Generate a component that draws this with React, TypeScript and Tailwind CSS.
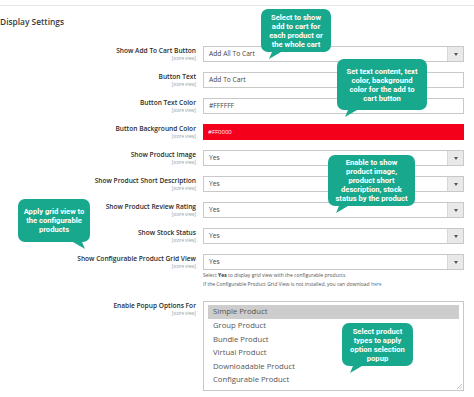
import type { ReactNode } from "react";

const font = { fontFamily: '"Open Sans", "Liberation Sans", sans-serif' };
const tipFont = { fontFamily: 'Roboto, "Liberation Sans", sans-serif' };

type Row = {
  label: string;
  value: string;
  kind: "select" | "text" | "color";
};

const rows: Row[] = [
  { label: "Show Add To Cart Button", value: "Add All To Cart", kind: "select" },
  { label: "Button Text", value: "Add To Cart", kind: "text" },
  { label: "Button Text Color", value: "#FFFFFF", kind: "text" },
  { label: "Button Background Color", value: "#FF0000", kind: "color" },
  { label: "Show Product Image", value: "Yes", kind: "select" },
  { label: "Show Product Short Description", value: "Yes", kind: "select" },
  { label: "Show Product Review Rating", value: "Yes", kind: "select" },
  { label: "Show Stock Status", value: "Yes", kind: "select" },
  { label: "Show Configurable Product Grid View", value: "Yes", kind: "select" },
];

const productTypes = [
  "Simple Product",
  "Group Product",
  "Bundle Product",
  "Virtual Product",
  "Downloadable Product",
  "Configurable Product",
];

function Label({ text }: { text: string }) {
  return (
    <div className="w-[203px] shrink-0 pr-[7px] pt-[2px] text-right leading-none">
      <div className="text-[6.6px] font-semibold text-[#2b2b2b]">{text}</div>
      <div className="mt-[1px] text-[4.5px] text-[#999]">[store view]</div>
    </div>
  );
}

function Field({ row }: { row: Row }) {
  if (row.kind === "color") {
    return (
      <div className="flex h-[16px] w-[261px] items-center bg-[#f5001b] pl-[5px] text-[6px] text-white">
        {row.value}
      </div>
    );
  }
  return (
    <div className="flex h-[16px] w-[261px] items-stretch border border-[#c8c8c8] bg-white">
      <div className="flex flex-1 items-center pl-[5px] text-[6.7px] text-[#444]">{row.value}</div>
      {row.kind === "select" && (
        <div className="flex w-[16px] items-center justify-center border-l border-[#d6d6d6] bg-[#e9e9e9]">
          <svg width="4" height="3" viewBox="0 0 4 3">
            <path d="M0 0h4L2 3z" fill="#555" />
          </svg>
        </div>
      )}
    </div>
  );
}

function Tip({
  className,
  tail,
  children,
}: {
  className: string;
  tail: "left" | "right";
  children: ReactNode;
}) {
  return (
    <div className={"absolute " + className}>
      <div
        className="flex h-full w-full items-center justify-center rounded-[7px] bg-[#17a88e] px-[2px] text-center text-[7.6px] font-bold leading-[9px] text-white"
        style={tipFont}
      >
        <div>{children}</div>
      </div>
      <svg
        className={"absolute top-full " + (tail === "left" ? "left-[8px]" : "right-[5px]")}
        width="12"
        height="7"
        viewBox="0 0 12 7"
      >
        {tail === "left" ? (
          <path d="M3 0h9L0 7z" fill="#17a88e" />
        ) : (
          <path d="M0 0h9L12 7z" fill="#17a88e" />
        )}
      </svg>
    </div>
  );
}

export default function App() {
  return (
    <div className="relative h-[397px] w-[474px] overflow-hidden bg-white" style={font}>
      <div className="mt-[5px] border-t border-[#e6e6e6]" />
      <h2 className="mt-[12px] text-[8.4px] font-semibold leading-none text-[#3b3b3b]">
        Display Settings
      </h2>

      <div className="mt-[20px] flex flex-col gap-[10px]">
        {rows.map((row) => (
          <div key={row.label} className="flex">
            <Label text={row.label} />
            <Field row={row} />
          </div>
        ))}
      </div>

      <div className="ml-[203px] mt-[1px] text-[5px] leading-[9px] text-[#555]">
        <div>
          Select <b className="text-[#333]">Yes</b> to display grid view with the configurable products
        </div>
        <div>
          If the Configurable Product Grid View is not installed, you can download{" "}
          <span className="text-[#3b7bc6]">here</span>
        </div>
      </div>

      <div className="mt-[12px] flex">
        <Label text="Enable Popup Options For" />
        <div className="relative h-[90px] w-[261px] border border-[#c8c8c8] bg-white px-[4px] pt-[3px]">
          {productTypes.map((p, i) => (
            <div
              key={p}
              className={
                "flex h-[13.6px] items-center pl-[5px] text-[7.7px] text-[#555] " +
                (i === 0 ? "bg-[#cdcdcd]" : "")
              }
            >
              {p}
            </div>
          ))}
          <svg className="absolute bottom-[1px] right-[1px]" width="5" height="5" viewBox="0 0 5 5">
            <path d="M5 0L0 5M5 2.5L2.5 5" stroke="#aaa" strokeWidth="0.7" />
          </svg>
        </div>
      </div>

      <Tip className="left-[261px] top-[9px] h-[43px] w-[70px]" tail="left">
        Select to show
        <br />
        add to cart for
        <br />
        each product or
        <br />
        the whole cart
      </Tip>
      <Tip className="left-[337px] top-[59px] h-[51px] w-[90px]" tail="left">
        Set text content, text
        <br />
        color, background
        <br />
        color for the add to
        <br />
        cart button
      </Tip>
      <Tip className="left-[328px] top-[155px] h-[51px] w-[87px]" tail="left">
        Enable to show
        <br />
        product image,
        <br />
        product short
        <br />
        description, stock
        <br />
        status by the product
      </Tip>
      <Tip className="left-[18px] top-[199px] h-[43px] w-[72px]" tail="right">
        Apply grid view to
        <br />
        the configurable
        <br />
        products
      </Tip>
      <Tip className="left-[342px] top-[323px] h-[43px] w-[71px]" tail="left">
        Select product
        <br />
        types to apply
        <br />
        option selection
        <br />
        popup
      </Tip>
    </div>
  );
}
